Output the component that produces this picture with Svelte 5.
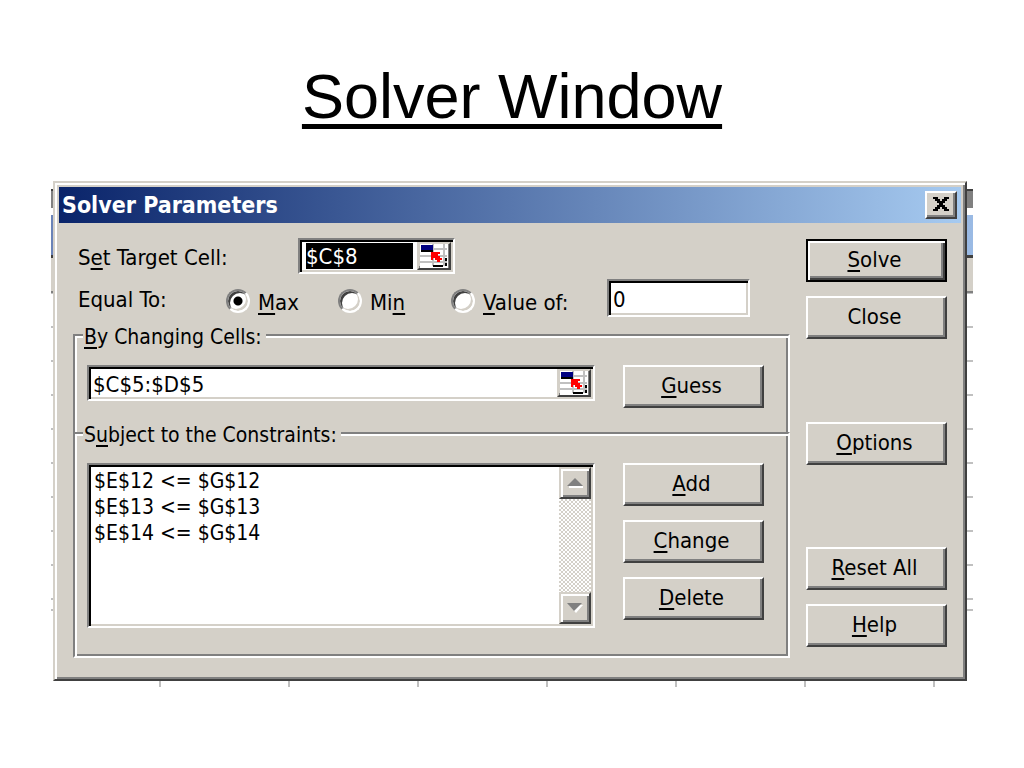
<script>
  const goals = [
    { id: 'max', before: '', key: 'M', after: 'ax' },
    { id: 'min', before: 'Mi', key: 'n', after: '' },
    { id: 'value', before: '', key: 'V', after: 'alue of:' }
  ];
  const constraints = ['$E$12 <= $G$12', '$E$13 <= $G$13', '$E$14 <= $G$14'];

  let goal = 'max';
  let targetCell = '$C$8';
  let targetValue = '0';
  let changingCells = '$C$5:$D$5';
</script>

{#snippet refIcon()}
  <svg viewBox="0 0 28 24" width="28" height="24" shape-rendering="crispEdges" aria-hidden="true">
    <path fill="#fff" d="M0 0h28v24H0z" />
    <path fill="#c0c0c0" d="M13 4h14v2H13zM0 11h27v2H0zM0 17h27v2H0zM12 0h2v22h-2zM23 0h2v22h-2z" />
    <path fill="#000080" d="M1 1h12v5H1z" />
    <path fill="#000" d="M1 6h12v2H1zM25 14h2v3h-2zM25 19h2v3h-2zM13 21h10v2H13z" />
    <path fill="#f00" d="M11 8h9v2h-2v2h2v2h2v2h-2v2h-3v-2h-2v-2h-2v2h-2z" />
  </svg>
{/snippet}

<main>
  <h1>Solver Window</h1>

  <div class="sheet">
    <section class="dialog" aria-label="Solver Parameters">
      <header>
        <h2>Solver Parameters</h2>
        <button class="close" type="button" aria-label="Close window">
          <svg viewBox="0 0 16 14" width="16" height="14" shape-rendering="crispEdges" aria-hidden="true">
            <path d="M0 0h5v2h2v2h2V2h2V0h5v2h-2v2h-2v2h-2v2h2v2h2v2h2v2h-5v-2H9v-2H7v2H5v2H0v-2h2v-2h2V8h2V6H4V4H2V2H0z" />
          </svg>
        </button>
      </header>

      <form on:submit|preventDefault>
        <div class="settings">
          <div class="row target">
            <label for="target-cell">S<u>e</u>t Target Cell:</label>
            <div class="field with-ref">
              <input id="target-cell" class="selected" type="text" bind:value={targetCell} />
              <button class="ref" type="button" aria-label="Pick target cell">{@render refIcon()}</button>
            </div>
          </div>

          <div class="row equal" role="radiogroup" aria-labelledby="equal-to">
            <span id="equal-to">Equal To:</span>
            {#each goals as item}
              <label class="radio">
                <input type="radio" name="goal" value={item.id} bind:group={goal} />
                <span>{item.before}<u>{item.key}</u>{item.after}</span>
              </label>
            {/each}
            <div class="field">
              <input type="text" aria-label="Target value" bind:value={targetValue} />
            </div>
          </div>

          <fieldset class="cells">
            <legend><u>B</u>y Changing Cells:</legend>
            <div class="group">
              <div class="field with-ref">
                <input type="text" aria-label="By Changing Cells" bind:value={changingCells} />
                <button class="ref" type="button" aria-label="Pick changing cells">{@render refIcon()}</button>
              </div>
              <button class="btn" type="button"><span><u>G</u>uess</span></button>
            </div>
          </fieldset>

          <fieldset class="constraints">
            <legend>S<u>u</u>bject to the Constraints:</legend>
            <div class="group">
              <div class="field list">
                <select size="6" aria-label="Subject to the Constraints">
                  {#each constraints as constraint}
                    <option>{constraint}</option>
                  {/each}
                </select>
                <div class="scrollbar">
                  <button type="button" aria-label="Scroll up">
                    <svg viewBox="0 0 16 10" width="16" height="10" aria-hidden="true">
                      <path fill="#fff" d="M2 8h14v2H2z" />
                      <path fill="#808080" d="M8 0l8 8H0z" />
                    </svg>
                  </button>
                  <button type="button" aria-label="Scroll down">
                    <svg viewBox="0 0 16 10" width="16" height="10" aria-hidden="true">
                      <path fill="#fff" d="M2 2h14l-7 8z" />
                      <path fill="#808080" d="M0 0h15L7 8z" />
                    </svg>
                  </button>
                </div>
              </div>
              <div class="stack">
                <button class="btn" type="button"><span><u>A</u>dd</span></button>
                <button class="btn" type="button"><span><u>C</u>hange</span></button>
                <button class="btn" type="button"><span><u>D</u>elete</span></button>
              </div>
            </div>
          </fieldset>
        </div>

        <div class="actions">
          <div class="stack">
            <button class="btn default" type="submit"><span><u>S</u>olve</span></button>
            <button class="btn" type="button">Close</button>
          </div>
          <button class="btn" type="button"><span><u>O</u>ptions</span></button>
          <div class="stack">
            <button class="btn" type="button"><span><u>R</u>eset All</span></button>
            <button class="btn" type="button"><span><u>H</u>elp</span></button>
          </div>
        </div>
      </form>
    </section>
  </div>
</main>

<style>
  :global(body) { margin: 0; background: #fff; color: #000; }
  :global(*) { box-sizing: border-box; }
  main {
    padding: 60px 51px 40px;
    font-family: 'DejaVu Sans Condensed', 'DejaVu Sans', sans-serif;
    font-size: 22px;
    line-height: 26px;
  }
  h1 {
    margin: 0 0 49px;
    text-align: center;
    font: 400 63px/72px 'Liberation Sans', Arial, sans-serif;
    text-decoration: underline;
    text-decoration-thickness: 5px;
    text-underline-offset: 6px;
  }

  /* worksheet showing around the edges of the dialog */
  .sheet {
    padding: 0 6px 6px 2px;
    background:
      linear-gradient(#fff 0 8px, #404040 8px 10px, #808080 10px 27px, #fff 27px 34px, transparent 34px) no-repeat,
      linear-gradient(90deg, #6a83b8, #9abae4) 0 34px / 100% 40px no-repeat,
      linear-gradient(#404040 0 3px, #d4d0c8 3px 36px, #808080 36px) 0 74px / 100% 38px no-repeat,
      linear-gradient(#c0c0c0, #c0c0c0) 0 428px / 100% 2px no-repeat,
      repeating-linear-gradient(#fff 0 9px, #c0c0c0 9px 11px, #fff 11px 34px) 0 0 / 100% 424px no-repeat,
      repeating-linear-gradient(90deg, #fff 0 108px, #c0c0c0 108px 110px, #fff 110px 129px);
  }
  .dialog {
    padding: 4px;
    border: 2px solid;
    border-color: #d4d0c8 #404040 #404040 #d4d0c8;
    background: #d4d0c8;
    box-shadow: inset 2px 2px #fff, inset -2px -2px #808080;
  }
  header {
    display: flex;
    align-items: center;
    justify-content: space-between;
    height: 36px;
    padding: 0 4px 0 3px;
    background: linear-gradient(90deg, #0a246a, #a6caf0);
  }
  h2 { margin: 0; color: #fff; font-size: 23px; line-height: 26px; }

  button {
    display: flex;
    align-items: center;
    justify-content: center;
    padding: 0;
    border: 2px solid;
    border-color: #fff #404040 #404040 #fff;
    border-radius: 0;
    background: #d4d0c8;
    box-shadow: inset -2px -2px #808080;
    color: #000;
    font: inherit;
  }
  u { text-decoration-thickness: 2px; text-underline-offset: 3px; text-decoration-skip-ink: none; }
  .close { width: 32px; height: 28px; padding-bottom: 2px; }
  .btn { width: 100%; height: 43px; padding: 0 4px 1px 0; }
  .btn.default {
    border-color: #000;
    box-shadow: inset 2px 2px #fff, inset -2px -2px #404040, inset -4px -4px #808080;
  }
  .stack { display: grid; gap: 14px; align-content: start; }

  form {
    display: grid;
    grid-template-columns: minmax(0, 1fr) 141px;
    gap: 16px;
    padding: 15px 14px 17px;
  }
  .actions {
    display: flex;
    flex-direction: column;
    justify-content: space-between;
    padding: 1px 0 11px;
  }

  .row { display: grid; align-items: center; padding-left: 5px; }
  .target { grid-template-columns: 220px 157px; margin-bottom: 5px; }
  .target label, #equal-to { padding-top: 3px; }
  .equal { grid-template-columns: 148px 112px 113px 156px 143px; margin-bottom: 4px; }
  .radio { display: flex; align-items: center; gap: 8px; padding-top: 5px; }
  .radio span { padding-top: 4px; }
  .radio input {
    appearance: none;
    width: 24px;
    height: 24px;
    margin: 0;
    border: 2px solid;
    border-color: #808080 #fff #fff #808080;
    border-radius: 50%;
    background: #fff;
    box-shadow: inset 2px 2px #404040, inset -2px -2px #d4d0c8;
  }
  .radio input:checked { background: radial-gradient(circle, #000 0 4px, #fff 5px); }

  .field {
    display: flex;
    padding: 2px;
    border: 2px solid;
    border-color: #808080 #fff #fff #808080;
    background: #fff;
    box-shadow: inset 2px 2px #000, inset -2px -2px #d4d0c8;
  }
  .field input {
    flex: 1;
    min-width: 0;
    height: 30px;
    padding: 2px 2px 0;
    border: 0;
    background: transparent;
    font: inherit;
  }
  .with-ref input { height: 28px; }
  .field .selected { margin: 1px 4px 1px 4px; padding: 1px 0 0; height: 26px; background: #000; color: #fff; }
  .ref { width: 34px; border-color: #d4d0c8 #404040 #404040 #d4d0c8; }

  fieldset {
    min-width: 0;
    margin: 0;
    padding: 0 24px 0 12px;
    border: 2px solid;
    border-color: #808080 #fff #fff #808080;
    box-shadow: inset 2px 2px #fff, inset -2px -2px #808080;
  }
  legend {
    margin-left: -4px;
    padding: 4px 4px 0 1px;
    background: #d4d0c8;
    font-size: 21px;
    line-height: 24px;
  }
  .cells { padding-top: 16px; padding-bottom: 26px; }
  .constraints { margin-top: -17px; padding-top: 16px; padding-bottom: 28px; }
  .group { display: grid; grid-template-columns: minmax(0, 1fr) 141px; gap: 28px; align-items: start; }

  .list { height: 165px; }
  select {
    flex: 1;
    min-width: 0;
    padding: 2px 0;
    border: 0;
    border-radius: 0;
    background: #fff;
    color: #000;
    font: inherit;
    font-size: 21px;
    overflow: hidden;
    outline: 0;
  }
  option { min-height: 26px; padding: 0 3px; line-height: 26px; }
  .scrollbar {
    display: flex;
    flex-direction: column;
    justify-content: space-between;
    width: 32px;
    background: repeating-conic-gradient(#d4d0c8 0 25%, #fff 0 50%) 0 0 / 4px 4px;
  }
  .scrollbar button { height: 32px; border-color: #d4d0c8 #404040 #404040 #d4d0c8; box-shadow: inset 2px 2px #fff, inset -2px -2px #808080; }
</style>
